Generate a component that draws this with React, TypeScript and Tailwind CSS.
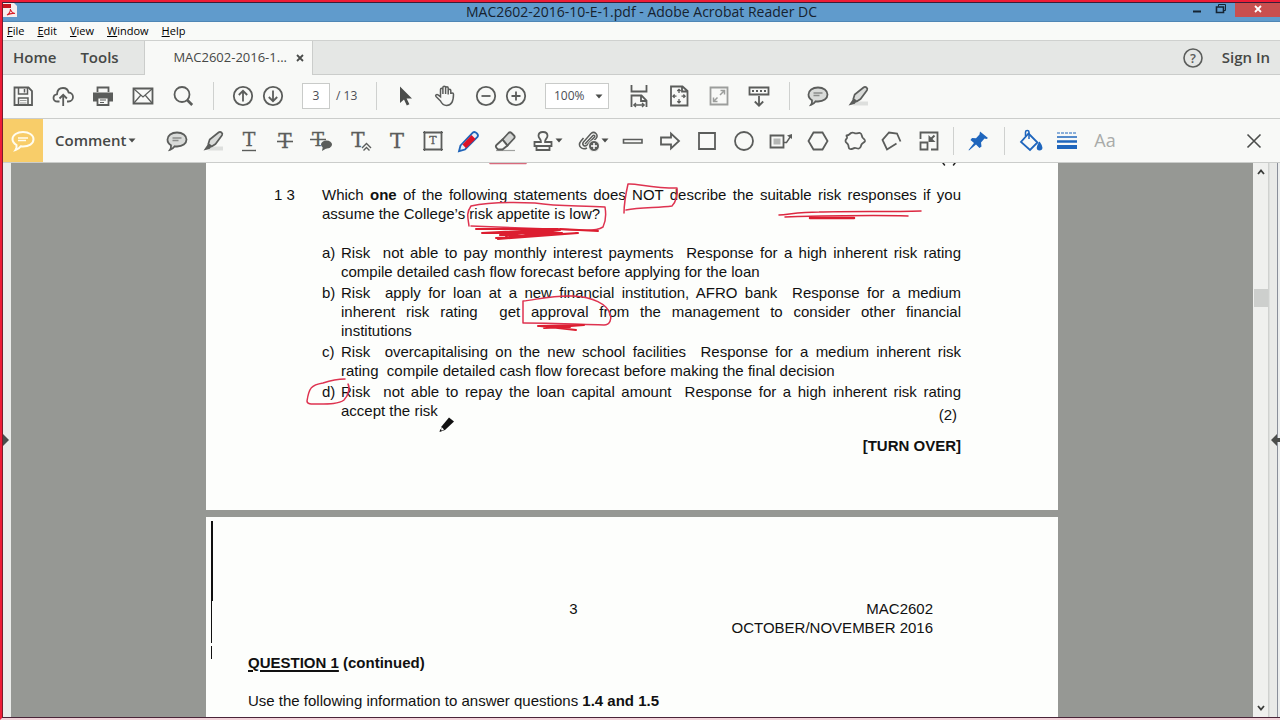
import React from "react";

const Icon = ({ children }: { children: React.ReactNode }) => (
  <svg
    width="24"
    height="24"
    viewBox="0 0 24 24"
    fill="none"
    stroke="#5b5d5b"
    strokeWidth="1.8"
    className="shrink-0"
    aria-hidden="true"
  >
    {children}
  </svg>
);

const Tool = ({
  label,
  width = "w-9",
  children,
}: {
  label: string;
  width?: string;
  children: React.ReactNode;
}) => (
  <button
    aria-label={label}
    className={`flex h-10 shrink-0 items-center justify-center ${width}`}
  >
    {children}
  </button>
);

const Divider = ({ className }: { className: string }) => (
  <div className={`h-7 w-px shrink-0 bg-[#cfd1cf] ${className}`} />
);

const Caret = () => (
  <svg width="8" height="5" viewBox="0 0 8 5" fill="#4b4d4b" className="shrink-0">
    <path d="M0.5 0.5h7L4 4.5z" />
  </svg>
);

const T = ({ x = 12, y = 19, size = 21 }) => (
  <text
    x={x}
    y={y}
    fontSize={size}
    textAnchor="middle"
    fill="#5b5d5b"
    stroke="#5b5d5b"
    strokeWidth="0.3"
    fontFamily="DejaVu Serif, serif"
  >
    T
  </text>
);

const Bubble = () => (
  <Icon>
    <path
      d="M12 3.5c5.5 0 9.5 2.9 9.5 7s-4 7-9.5 7c-.8 0-1.6-.1-2.3-.2-1.2 1.8-2.7 3-4.7 3.5 .9-1.3 1.2-2.9 1-4.5C3.8 15 2.5 13 2.5 10.5c0-4.1 4-7 9.5-7z"
      fill="#d9dbd9"
    />
    <path d="M7.5 9h9M7.5 11.5h6" stroke="#8b8d8b" strokeWidth="1.4" />
  </Icon>
);

const Marker = () => (
  <Icon>
    <path d="M7 21.5h15v-4H11z" fill="#dddfdd" stroke="none" />
    <path
      d="M17.5 3.5c2-1.6 4.8.6 3.5 2.8L14.5 15l-3.8 2.5-3.4-2.6 1.4-4.4z"
      fill="#d9dbd9"
      strokeWidth="1.7"
    />
    <path d="M7.2 14.8l3.6 2.8-2.3 2.3-6 1.6z" fill="#5b5d5b" stroke="none" />
  </Icon>
);

const lineClass = "block [text-align-last:justify]";

const answers = [
  {
    key: "a)",
    lines: [
      "Risk\u00a0 not able to pay monthly interest payments\u00a0 Response for a high inherent risk rating",
    ],
    last: "compile detailed cash flow forecast before applying for the loan",
  },
  {
    key: "b)",
    lines: [
      "Risk\u00a0 apply for loan at a new financial institution, AFRO bank\u00a0 Response for a medium",
      "inherent risk rating\u00a0 get approval from the management to consider other financial",
    ],
    last: "institutions",
  },
  {
    key: "c)",
    lines: [
      "Risk\u00a0 overcapitalising on the new school facilities\u00a0 Response for a medium inherent risk",
    ],
    last: "rating\u00a0 compile detailed cash flow forecast before making the final decision",
  },
  {
    key: "d)",
    lines: [
      "Risk\u00a0 not able to repay the loan capital amount\u00a0 Response for a high inherent risk rating",
    ],
    last: "accept the risk",
    marks: "(2)",
  },
];

const TitleBar = () => (
  <header className="flex h-[19px] shrink-0 items-start border-b border-[#4f86b5] bg-[#609bcc]">
    <div className="flex-1">
      <svg width="14" height="14" viewBox="0 0 14 14">
        <path d="M0 0h11l3 3v11H0z" fill="#f6eeee" />
        <path d="M0 1h8v4H0z" fill="#c8141e" />
        <path
          d="M4 12c2-1 3.5-4 3.5-6 .5 3 2 4 4.5 4.5-3-.5-5.500 0-8 1.5z"
          fill="none"
          stroke="#d8202a"
          strokeWidth="1.2"
        />
      </svg>
    </div>
    <h1 className="text-[14px] leading-[17px] text-[#16222e]">
      MAC2602-2016-10-E-1.pdf - Adobe Acrobat Reader DC
    </h1>
    <div className="flex flex-1 justify-end">
      <button aria-label="Minimize" className="flex h-3.5 w-6 justify-center">
        <svg width="10" height="12" viewBox="0 0 10 12">
          <path d="M1 8.5h8" stroke="#152433" strokeWidth="2" />
        </svg>
      </button>
      <button aria-label="Restore" className="flex h-3.5 w-6 justify-center">
        <svg width="12" height="12" viewBox="0 0 12 12" fill="none" stroke="#152433">
          <path d="M3.5 3.5v-2h7v6h-2" />
          <path d="M1.5 4h7v5.5h-7z" strokeWidth="1.6" />
        </svg>
      </button>
      <button
        aria-label="Close"
        className="ml-0.5 flex h-3.5 w-[45px] items-center justify-center bg-[#c94f4f]"
      >
        <svg width="8" height="14" viewBox="0 0 8 14">
          <path d="M1 3l6 6M7 3L1 9" stroke="#fff" strokeWidth="1.8" />
        </svg>
      </button>
    </div>
  </header>
);

const MenuBar = () => (
  <nav className="flex h-[19px] shrink-0 items-center gap-[13px] border-b border-[#cfd1cf] bg-[#f9faf8] px-1 text-[11px] text-black">
    {["File", "Edit", "View", "Window", "Help"].map((item) => (
      <button key={item} className="leading-4">
        <span className="underline">{item[0]}</span>
        {item.slice(1)}
      </button>
    ))}
  </nav>
);

const TabBar = () => (
  <div className="flex h-[34px] shrink-0 bg-[#e5e7e5] text-[15px] font-semibold text-[#464846]">
    <div className="flex w-[142px] shrink-0 items-center gap-6 border-r border-b border-[#cbcdcb] pl-[10px]">
      <button>Home</button>
      <button>Tools</button>
    </div>
    <div className="flex w-[167px] shrink-0 items-center justify-end gap-[9px] bg-[#f8f9f7] pr-2 text-[13px] font-normal">
      <span>MAC2602-2016-1...</span>
      <button aria-label="Close tab">
        <svg width="8" height="8" viewBox="0 0 8 8">
          <path d="M1 1l6 6M7 1L1 7" stroke="#4b4d4b" strokeWidth="1.8" />
        </svg>
      </button>
    </div>
    <div className="flex flex-1 items-center justify-end gap-[18px] border-b border-l border-[#cbcdcb] pr-2.5">
      <button aria-label="Help">
        <svg width="22" height="22" viewBox="0 0 22 22">
          <circle cx="11" cy="11" r="9" fill="none" stroke="#5b5d5b" strokeWidth="1.6" />
          <text
            x="11"
            y="16"
            fontSize="13"
            fontWeight="600"
            textAnchor="middle"
            fill="#5b5d5b"
            fontFamily="Open Sans, sans-serif"
          >
            ?
          </text>
        </svg>
      </button>
      <button>Sign In</button>
    </div>
  </div>
);

const MainToolbar = () => (
  <div className="flex h-11 shrink-0 items-center border-b border-[#cbcdcb] bg-[#f8f9f7] pb-0.5 text-[12px] text-[#4b4d55]">
    <Tool label="Save" width="w-10">
      <Icon>
        <path d="M3.5 3.5h14l3.5 3.5v14H3.5z" />
        <path d="M7.5 4v6h9V4M13.5 5v3.5M7.5 21v-7h9.5v7" strokeWidth="1.5" />
        <path d="M9 16.5h6.5M9 19h6.5" stroke="#9a9c9a" strokeWidth="1.2" />
      </Icon>
    </Tool>
    <Tool label="Upload" width="w-10">
      <Icon>
        <path d="M8.5 17.5H6.5c-2.5 0-4-1.5-4-3.5s1.5-3.5 3.5-3.7C6.2 6.5 8.5 4 12 4c3 0 5 1.7 5.6 4.5 2.5.1 4.4 2 4.4 4.5s-2 4.5-4.5 4.5H16" />
        <path d="M12.2 22V11M8.5 14.5l3.7-3.7 3.7 3.7" />
      </Icon>
    </Tool>
    <Tool label="Print" width="w-10">
      <Icon>
        <path d="M6.5 8V3.5h11V8" />
        <path d="M2 8.5h20v9h-4v-4H6v4H2z" fill="#5b5d5b" stroke="none" />
        <path d="M6.5 13.5h11v7.5h-11z" fill="#f8f9f7" />
        <path d="M9 16h6M9 18.5h4" strokeWidth="1.2" />
      </Icon>
    </Tool>
    <Tool label="Email" width="w-10">
      <Icon>
        <path d="M2.5 4.5h19v15h-19z" />
        <path d="M3 5l9 8 9-8M3 19l6.5-7.5M21 19l-6.5-7.5" strokeWidth="1.2" />
      </Icon>
    </Tool>
    <Tool label="Find" width="w-10">
      <Icon>
        <circle cx="11" cy="10.5" r="7.5" />
        <path d="M16.2 16l5 5" strokeWidth="2.6" />
      </Icon>
    </Tool>
    <Divider className="ml-2.5 mr-3.5" />
    <Tool label="Previous page" width="w-[30px]">
      <Icon>
        <circle cx="12" cy="12" r="9.2" />
        <path d="M12 17.5V7M7.8 11L12 6.8l4.2 4.2" />
      </Icon>
    </Tool>
    <Tool label="Next page" width="w-[30px]">
      <Icon>
        <circle cx="12" cy="12" r="9.2" />
        <path d="M12 6.5V17M7.8 13l4.2 4.2 4.2-4.2" />
      </Icon>
    </Tool>
    <input
      aria-label="Page number"
      defaultValue="3"
      className="ml-[14px] h-[26px] w-7 border border-[#c9cbc9] bg-white text-center"
    />
    <span className="ml-1.5 w-[26px] shrink-0 whitespace-nowrap">/ 13</span>
    <Divider className="ml-3.5 mr-2" />
    <Tool label="Select" width="w-10">
      <Icon>
        <path
          d="M7 2.5v16.5l4-3.5 2.8 6 2.6-1.2-2.8-5.8h5.4z"
          fill="#4b4d4b"
          stroke="none"
        />
      </Icon>
    </Tool>
    <Tool label="Hand" width="w-10">
      <Icon>
        <path
          d="M7.5 17L3 12.5c-1-1.2.6-2.7 2-1.7l2.5 2V5.5c0-1.6 2.4-1.6 2.4 0V10 3.5c0-1.7 2.7-1.7 2.7 0V10 4c0-1.6 2.6-1.6 2.6 0v6.5V6.5c0-1.6 2.6-1.5 2.6 0V10c.2-1.5 2.7-1.5 2.7.3 0 5.2-1 11.2-7 11.2-3.2 0-4.8-2-6-4.5z"
          strokeWidth="1.5"
        />
      </Icon>
    </Tool>
    <Tool label="Zoom out" width="ml-1.5 w-[30px]">
      <Icon>
        <circle cx="12" cy="12" r="9.2" />
        <path d="M7.5 12h9" />
      </Icon>
    </Tool>
    <Tool label="Zoom in" width="w-[30px]">
      <Icon>
        <circle cx="12" cy="12" r="9.2" />
        <path d="M7.5 12h9M12 7.5v9" />
      </Icon>
    </Tool>
    <div className="relative ml-3.5 shrink-0">
      <select
        aria-label="Zoom level"
        className="h-[26px] w-16 appearance-none border border-[#c9cbc9] bg-white pl-2"
      >
        <option>100%</option>
      </select>
      <span className="pointer-events-none absolute top-[11px] right-1.5">
        <Caret />
      </span>
    </div>
    <div className="ml-2.5 flex">
      <Tool label="Fit width" width="w-10">
        <Icon>
          <path d="M4.5 1v6.5h15V1" />
          <path d="M4.5 23V11.5h10l5 5V23M14 12v5h5" />
          <path
            d="M6.5 21h11M9 19l-2.2 2 2.2 2M15 19l2.2 2-2.2 2"
            strokeWidth="1.3"
          />
        </Icon>
      </Tool>
      <Tool label="Fit page" width="w-10">
        <Icon>
          <path d="M4 2.5h11.5L20.5 7v14.5H4zM15 3v4.5h5" />
          <path
            d="M12 9V5.5M10.3 7L12 5.3 13.7 7M12 15v3.8M10.3 17.2l1.7 1.7 1.7-1.7M9.5 12.2H6M7.6 10.5l-1.7 1.7 1.7 1.7M14.5 12.2H18M16.4 10.5l1.7 1.7-1.7 1.7"
            strokeWidth="1.3"
          />
        </Icon>
      </Tool>
      <Tool label="Full screen" width="w-10">
        <Icon>
          <path d="M3.5 3.5h17v17h-17z" stroke="#9c9e9c" />
          <path
            d="M13 11l4.5-4.5M13.5 6.5h4v4M10.5 13.5L6.5 17.5M6.5 13.5v4h4"
            stroke="#9c9e9c"
            strokeWidth="1.5"
          />
        </Icon>
      </Tool>
      <Tool label="Hide toolbar" width="w-10">
        <Icon>
          <path d="M2.5 3.5h19v7h-19z" />
          <path d="M5 7h14" strokeWidth="2.2" strokeDasharray="2 2" />
          <path d="M12 12v9.5M7.8 17.5l4.2 4.2 4.2-4.2" />
        </Icon>
      </Tool>
    </div>
    <Divider className="ml-2.5 mr-2" />
    <Tool label="Add comment" width="w-10">
      <Bubble />
    </Tool>
    <Tool label="Highlight" width="w-10">
      <Marker />
    </Tool>
  </div>
);

const CommentToolbar = () => (
  <div className="flex h-11 shrink-0 items-center border-b border-[#cbcdcb] bg-[#f8f9f7]">
    <div className="flex h-full w-10 shrink-0 items-center justify-center bg-[#f8cd69]">
      <Icon>
        <g stroke="#fffdf0">
          <path
            d="M12 3c5.8 0 10.5 2.9 10.5 7.3s-4.7 7.2-10.5 7.2c-.8 0-1.6 0-2.3-.2-1.5 2-3 3-5.2 3.7 1-1.5 1.3-3.2 1-5C3 14.5 1.5 12.7 1.5 10.3 1.5 5.9 6.2 3 12 3z"
            strokeWidth="2"
          />
          <path d="M7 9h10M7 11.5h8" strokeWidth="1.5" />
        </g>
      </Icon>
    </div>
    <button className="ml-3 flex w-[104px] shrink-0 items-center gap-0.5 text-[15px] font-semibold text-[#464846]">
      Comment
      <Caret />
    </button>
    <Tool label="Sticky note">
      <Bubble />
    </Tool>
    <Tool label="Highlight text">
      <Marker />
    </Tool>
    <Tool label="Underline text">
      <Icon>
        <T y={17} size={19} />
        <path d="M5 21.5h14" strokeWidth="1.4" />
      </Icon>
    </Tool>
    <Tool label="Strikethrough text">
      <Icon>
        <T y={19} size={20} />
        <path d="M4 12.5h16" strokeWidth="1.6" />
      </Icon>
    </Tool>
    <Tool label="Replace text">
      <Icon>
        <T x={9} y={17} size={18} />
        <path d="M1 10.5h16" strokeWidth="1.5" />
        <ellipse cx="17.5" cy="15.500" rx="5.5" ry="4" fill="#5b5d5b" stroke="none" />
        <path d="M14 17l-1 5 5-3z" fill="#5b5d5b" stroke="none" />
      </Icon>
    </Tool>
    <div className="ml-1 flex">
      <Tool label="Insert text">
        <Icon>
          <T x={9} y={18} size={20} />
          <path d="M13 19l4.5-4.5L22 19M14.5 21.5l3-3 3 3" strokeWidth="1.4" />
        </Icon>
      </Tool>
      <Tool label="Add text comment">
        <Icon>
          <T />
        </Icon>
      </Tool>
      <Tool label="Add text box">
        <Icon>
          <path d="M3.5 3.5h17v17h-17z" />
          <path
            d="M2 3.5h3M3.5 2v3M19 3.5h3M20.5 2v3M2 20.5h3M3.5 19v3M19 20.5h3M20.5 19v3"
            strokeWidth="1.2"
          />
          <T x={12} y={15} size={11} />
        </Icon>
      </Tool>
      <Tool label="Pencil">
        <Icon>
          <path
            d="M3.5 16.5L16 3.5c2-1.8 6.300 2.200 4.500 4.5L8 20.500 2 22.2z"
            fill="#e8eef6"
            stroke="#2064b8"
          />
          <path d="M5.5 15.500L14.500 6l4 4L9 19.300z" fill="#dc1428" stroke="none" />
        </Icon>
      </Tool>
      <Tool label="Eraser">
        <Icon>
          <path d="M3 21.5h19" stroke="#a0a2a0" strokeWidth="1.2" />
          <path d="M9.5 10.5l6-6.5c1-1 2-1 3 0l2.5 2.5c1 1 1 2 0 3l-6.5 7z" fill="#d5d7d5" />
          <path d="M9.5 10.5L3.5 16c-1 1-.8 2 0 3l1.5 1.5h4.5l5-4z" />
        </Icon>
      </Tool>
    </div>
    <Tool label="Stamp" width="w-12">
      <Icon>
        <path d="M10 13c.5-2.500-2.500-3.500-2.500-6.200C7.500 4.500 9 3 12 3s4.500 1.500 4.500 3.800C16.500 9.500 13.500 10.500 14 13h6.500v4h-17v-4z" />
        <path d="M5.5 17.5v3.5h13v-3.5" />
      </Icon>
      <Caret />
    </Tool>
    <Tool label="Attach file" width="w-11">
      <Icon>
        <path
          d="M8 15l8-8.5c1-1 2.5.5 1.5 1.5L10 16c-2.500 2.500-5.500-.5-3.500-3L14 4.500c3.500-3 8 1.500 5 5l-2 2M6.500 9L4 12c-4 5 1 9.500 6 7"
          strokeWidth="1.5"
        />
        <circle cx="17" cy="17" r="5.5" fill="#5b5d5b" stroke="#f8f9f7" strokeWidth="1" />
        <path d="M14 17h6M17 14v6" stroke="#fff" strokeWidth="1.5" />
      </Icon>
      <Caret />
    </Tool>
    <div className="flex gap-px">
      <Tool label="Line">
        <Icon>
          <path d="M2.5 10.5h18.5v3.5H2.5z" strokeWidth="1.6" />
        </Icon>
      </Tool>
      <Tool label="Arrow">
        <Icon>
          <path d="M3 8.5h10V4.5l8 7.5-8 7.5v-4H3z" />
        </Icon>
      </Tool>
      <Tool label="Rectangle">
        <Icon>
          <path d="M4 4h16v16H4z" />
        </Icon>
      </Tool>
      <Tool label="Oval">
        <Icon>
          <circle cx="12" cy="12" r="9" />
        </Icon>
      </Tool>
      <Tool label="Callout">
        <Icon>
          <path d="M1.5 6.5h13v12h-13z" />
          <path d="M4.5 9.5h7v6h-7z" fill="#b5b7b5" stroke="none" />
          <path d="M14.5 13.5h3l4-6" strokeWidth="1.4" />
          <path d="M18 6.500l5-1.500v5z" fill="#5b5d5b" stroke="none" />
        </Icon>
      </Tool>
      <Tool label="Polygon">
        <Icon>
          <path d="M7.5 3.5h9l5 8.5-5 8.5h-9L2.5 12z" />
        </Icon>
      </Tool>
      <Tool label="Cloud">
        <Icon>
          <path
            d="M3.500 6.500C5 6.500 6.500 5.500 8 4c1.500-1 2.500-.3 4 .3 2 .6 3.500-.6 5-.3 2 .5 1.500 3 2.500 4.500 1 1.300 2.800 2 2.500 3.500-.4 1.600-2.500 1.800-3.500 3.500-.8 1.500-.5 3.500-2.500 4-1.700.4-3-.8-4.500-.5-1.700.3-2.500 1.500-4.500 1-2-.6-1-3-2-4.500-.8-1.300-2.500-2-2.500-3.500 0-1.700 1.200-2 1.500-3 .2-1-.5-1.500-.5-2.500z"
            strokeLinejoin="round"
          />
        </Icon>
      </Tool>
      <Tool label="Connected lines">
        <Icon>
          <path d="M20.5 12.500L17 4.500 9 3.500 2.500 11l4.500 9.500 9.500-6" />
        </Icon>
      </Tool>
      <Tool label="Expand">
        <Icon>
          <path d="M3.5 10V3.500h17v17H14" />
          <path d="M3.500 13.500h7v7h-7z" />
          <path d="M17.500 6.500l-4 4" strokeWidth="2" />
          <path d="M11.500 6v7h7z" fill="#5b5d5b" stroke="none" />
        </Icon>
      </Tool>
    </div>
    <Divider className="mx-1.5" />
    <Tool label="Keep tool selected">
      <Icon>
        <path
          d="M14 2.500l8 6.500-1.500 1-2-.5-3.500 4 .5 4-2 1.500-3.500-3.500L3 21.500l-.5-.5 5.500-7-3.500-3 1.500-2 4 .3 3.500-3.800z"
          fill="#1f66bd"
          stroke="none"
        />
      </Icon>
    </Tool>
    <Divider className="mx-2" />
    <Tool label="Fill color">
      <Icon>
        <g stroke="#1f66bd">
          <path d="M9.500 4.500l9 9-7.500 7.500-9-8z" />
          <path d="M6.500 7V3c0-2 3.500-2 3.500 0v7" strokeWidth="1.5" />
          <path d="M20.500 14c3 4 2.500 6.500 0 6.500s-2.500-2.500 0-6.500z" fill="#1f66bd" />
        </g>
      </Icon>
    </Tool>
    <Tool label="Line thickness">
      <Icon>
        <g stroke="#1f66bd">
          <path d="M2 4h20" strokeWidth="1" strokeDasharray="3 1" />
          <path d="M2 8h20" strokeWidth="1.5" />
          <path d="M2 12.500h20" strokeWidth="2.5" />
          <path d="M2 18h20" strokeWidth="4" />
        </g>
      </Icon>
    </Tool>
    <button className="w-10 shrink-0 text-[18px] text-[#a9aba9]">Aa</button>
    <button aria-label="Close comment toolbar" className="mr-[18px] ml-auto">
      <svg width="16" height="16" viewBox="0 0 16 16">
        <path d="M1.5 1.5l13 13M14.5 1.500l-13 13" stroke="#4b4d4b" strokeWidth="1.6" />
      </svg>
    </button>
  </div>
);

// Freehand pencil marks over the first page
const PencilMarks = () => (
  <svg
    className="pointer-events-none absolute top-0 left-0"
    width="852"
    height="347"
    viewBox="206 163 852 347"
    fill="none"
    stroke="#de3350"
    strokeWidth="1.5"
    strokeLinejoin="round"
    strokeLinecap="round"
  >
    <path d="M490 163.500h36" stroke="#d86a7c" />
    <path d="M943 163l1.500 2M955 163l-1.500 2" stroke="#222" />
    <path d="M624 213c0-8 2-20 4-29 8-1 22 4 49 4 1 6-1 14-5 18-14 2-32 1-46 4" />
    <path d="M469 226c-1-8-3-13 2-20 18-4 40-4 64-3 25 4 48 2 70 4 1 6 1 14-2 20-8 5-18 3-26 3l-106-4" />
    <path
      d="M476 229h82l-76 4h80l-56 3 30-7-36 6 60-5-62 9 80-6-82 5"
      stroke="#dc1e30"
      strokeWidth="2"
    />
    <path d="M560 229l38 2" stroke="#dc1e30" strokeWidth="2" />
    <path d="M779 215c12-1 22-3 40-3 30-1 70 0 102-1M785 217c36-1 90-2 123-1" stroke="#dc2840" />
    <path d="M810 218h44" stroke="#dc1e30" strokeWidth="2.5" />
    <path d="M523 323v-22c12-1 30-6 50-5 20 1 34 8 37 18 2 5 0 11-6 11-28-1-54-2-80-2" />
    <path d="M538 326l46-1-40 3 26-1-30-1 36 4" stroke="#dc1e30" strokeWidth="2" />
    <path d="M345 379c-8 0-16 2-22 4-12 2-14 5-16 18 0 4 6 3 12 3 10 0 20 0 25-4 5-5 6-13 4-16" />
    <g stroke="none" fill="#111">
      <path d="M449 417.500l5 4-9 8.500-4.500 1.500 1-5z" />
      <path d="M441.500 427l2.500 2.500-3 1.500z" fill="#fff" />
      <path d="M439.500 432l.8-3 1.700 2z" />
    </g>
  </svg>
);

const PageOne = () => (
  <article className="relative mx-auto h-[347px] w-[852px] shrink-0 bg-[#fdfefc] pt-[22px] pr-[97px] pl-[68px]">
    <div className="flex">
      <span className="w-12 shrink-0">1 3</span>
      <div className="flex-1">
        <p>
          <span className={lineClass}>
            Which <b>one</b> of the following statements does NOT describe the
            suitable risk responses if you
          </span>
          <span className="block">assume the College’s risk appetite is low?</span>
        </p>
        <ol className="mt-5 grid gap-0.5">
          {answers.map((answer) => (
            <li key={answer.key} className="flex">
              <span className="w-[19px] shrink-0">{answer.key}</span>
              <div className="flex-1">
                {answer.lines.map((line) => (
                  <span key={line} className={lineClass}>
                    {line}
                  </span>
                ))}
                <span className="flex justify-between">
                  <span>{answer.last}</span>
                  {answer.marks && <span className="pt-1 pr-1">{answer.marks}</span>}
                </span>
              </div>
            </li>
          ))}
        </ol>
        <p className="mt-3 text-right font-bold">[TURN OVER]</p>
      </div>
    </div>
    <PencilMarks />
  </article>
);

const PageTwo = () => (
  <article className="relative mx-auto mt-[7px] w-[852px] flex-1 bg-[#fdfefc] pt-[82px]">
    <svg className="absolute top-1 left-1" width="4" height="140" viewBox="0 0 4 140">
      <path d="M2 0v80" stroke="#111" strokeWidth="2" />
      <path d="M1.5 80v42M1.5 125v13" stroke="#111" strokeWidth="1" />
    </svg>
    <header className="grid grid-cols-3 pr-[125px] pl-2">
      <span className="col-start-2 text-center">3</span>
      <span className="text-right">
        MAC2602
        <br />
        OCTOBER/NOVEMBER 2016
      </span>
    </header>
    <div className="pl-[42px]">
      <h2 className="mt-4 font-bold">
        <span className="underline decoration-2 underline-offset-2">QUESTION 1</span> (continued)
      </h2>
      <p className="mt-[19px]">
        Use the following information to answer questions <b>1.4 and 1.5</b>
      </p>
    </div>
  </article>
);

const App = () => {
  return (
    <div className="flex h-screen flex-col overflow-hidden border-t-2 border-b-2 border-l-2 border-t-[#ee1c36] border-b-[#f3d3da] border-l-[#ee1c36] bg-[#f8f9f7] font-['Open_Sans',sans-serif]">
      <div className="flex min-h-0 flex-1 flex-col border-t border-b border-l border-t-[#3a1f38] border-b-[#4a2438] border-l-[#7a1c2c]">
        <TitleBar />
        <MenuBar />
        <TabBar />
        <MainToolbar />
        <CommentToolbar />
        <main className="flex min-h-0 flex-1">
          <button
            aria-label="Show navigation pane"
            className="flex w-2 shrink-0 items-center bg-[#ebecea]"
          >
            <svg width="6" height="12" viewBox="0 0 6 12">
              <path d="M0 0l6 6-6 6z" fill="#4b4d4b" />
            </svg>
          </button>
          <div className="flex min-w-0 flex-1 flex-col overflow-hidden bg-[#969894] font-['Liberation_Sans',Arial,sans-serif] text-[15px] leading-[19px] text-[#111]">
            <PageOne />
            <PageTwo />
          </div>
          <div className="flex w-4 shrink-0 flex-col items-center justify-between border-r border-[#cfd1cf] bg-[#eff0ee] py-1.5">
            <svg width="8" height="6" viewBox="0 0 8 6">
              <path d="M1 5l3-3.500L7 5" fill="none" stroke="#3b3d3b" strokeWidth="1.8" />
            </svg>
            <div className="mt-[114px] mb-auto h-[18px] w-[14px] bg-[#cdcfcd]" />
            <svg width="8" height="6" viewBox="0 0 8 6">
              <path d="M1 1l3 3.500L7 1" fill="none" stroke="#3b3d3b" strokeWidth="1.8" />
            </svg>
          </div>
          <button
            aria-label="Show tools pane"
            className="flex w-[11px] shrink-0 items-center justify-end border-l border-[#dddfdd] bg-[linear-gradient(to_right,#e9eae8_7px,#8a8f9a_7px,#8a8f9a_8px,#eceeee_8px)]"
          >
            <svg width="9" height="12" viewBox="0 0 9 12">
              <path d="M6 0L0 6l6 6V8h3V4H6z" fill="#4b4d4b" />
            </svg>
          </button>
        </main>
      </div>
    </div>
  );
};

export default App;
